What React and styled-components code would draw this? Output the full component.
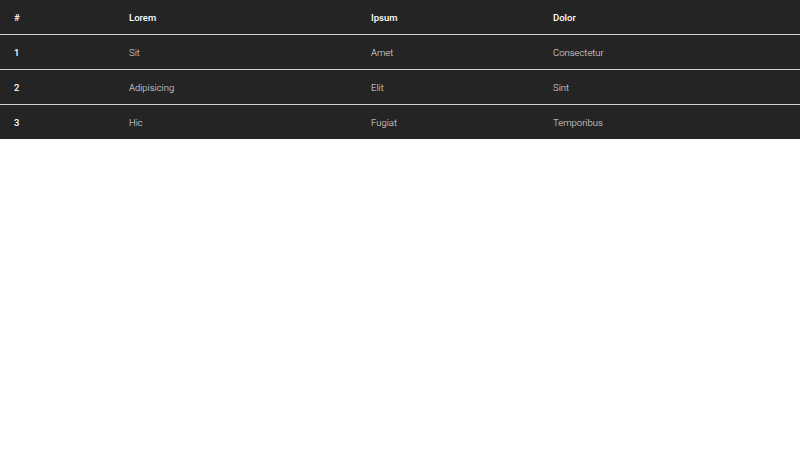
import React from "react";
import styled, { createGlobalStyle } from "styled-components";

const rows = [
  ["1", "Sit", "Amet", "Consectetur"],
  ["2", "Adipisicing", "Elit", "Sint"],
  ["3", "Hic", "Fugiat", "Temporibus"],
];

function App() {
  return (
    <>
      <GlobalStyle />
      <Table>
        <colgroup>
          <col style={{ width: 115 }} />
          <col style={{ width: 242 }} />
          <col style={{ width: 182 }} />
          <col />
        </colgroup>
        <thead>
          <tr>
            <Th>#</Th>
            <Th>Lorem</Th>
            <Th>Ipsum</Th>
            <Th>Dolor</Th>
          </tr>
        </thead>
        <tbody>
          {rows.map((r) => (
            <tr key={r[0]}>
              <Th as="td">{r[0]}</Th>
              <Td>{r[1]}</Td>
              <Td>{r[2]}</Td>
              <Td>{r[3]}</Td>
            </tr>
          ))}
        </tbody>
      </Table>
    </>
  );
}

const GlobalStyle = createGlobalStyle`
  body {
    margin: 0;
    background: #ffffff;
    font-family: Roboto, "Liberation Sans", sans-serif;
  }
`;

const Table = styled.table`
  width: 100%;
  border-collapse: collapse;
  table-layout: fixed;
  background-color: #242424;
  color: #ffffff;
`;

const Th = styled.th`
  height: 34px;
  padding: 1px 14px 0;
  box-sizing: border-box;
  text-align: left;
  font-size: 9.5px;
  font-weight: 500;
  color: #ffffff;
  tbody & {
    height: 35px;
    border-top: 1px solid #d0d0d0;
  }
`;

const Td = styled.td`
  height: 35px;
  padding: 1px 14px 0;
  box-sizing: border-box;
  text-align: left;
  font-size: 9.5px;
  font-weight: 300;
  color: #e0e0e0;
  border-top: 1px solid #d0d0d0;
`;

export default App;
